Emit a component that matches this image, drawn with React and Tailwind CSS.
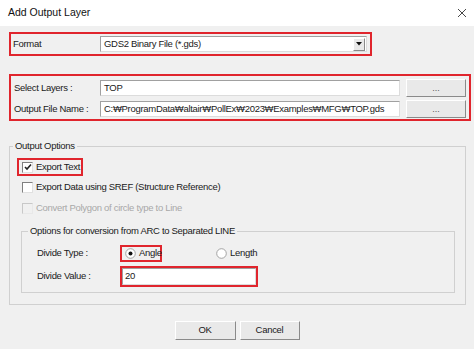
import React from "react";

const F = { fontFamily: '"Liberation Sans", Arial, sans-serif' };

function Sunken({ className = "", children }) {
  return (
    <div className={"bg-white border-t border-l border-t-[#a0a0a0] border-l-[#a0a0a0] border-b border-r border-b-[#dcdcdc] border-r-[#dcdcdc] flex items-center overflow-hidden whitespace-nowrap " + className}>
      {children}
    </div>
  );
}

function RaisedBtn({ className = "", children }) {
  return (
    <div className={"bg-[#e9e9e9] border-t border-l border-t-white border-l-white border-b border-r border-b-[#8a8a8a] border-r-[#8a8a8a] flex items-center justify-center " + className}>
      {children}
    </div>
  );
}

function Check({ checked, disabled }) {
  return (
    <div className={"w-[11px] h-[11px] border-t border-l border-b border-r flex items-center justify-center shrink-0 " + (disabled ? "bg-[#f0f0f0] border-t-[#c8c8c8] border-l-[#c8c8c8] border-b-[#e8e8e8] border-r-[#e8e8e8]" : "bg-white border-t-[#808080] border-l-[#808080] border-b-[#e0e0e0] border-r-[#e0e0e0]")}>
      {checked && (
        <svg width="8" height="8" viewBox="0 0 8 8">
          <path d="M1 4 L3 6 L7 1.5" fill="none" stroke="#222" strokeWidth="1.6" />
        </svg>
      )}
    </div>
  );
}

function Radio({ checked }) {
  return (
    <svg width="11" height="11" viewBox="0 0 11 11" className="shrink-0">
      <circle cx="5.5" cy="5.5" r="4.8" fill="white" stroke="#9a9a9a" strokeWidth="0.9" />
      {checked && <circle cx="5.5" cy="5.5" r="2" fill="#111" />}
    </svg>
  );
}

export default function App() {
  const txt = "text-[9.5px] tracking-[-0.3px] text-[#1a1a1a] whitespace-nowrap";
  return (
    <div className="w-[474px] h-[349px] bg-[#f0f0f0] flex flex-col overflow-hidden" style={F}>
      {/* Title bar */}
      <div className="h-[26px] bg-white flex items-center justify-between pl-[8px] pr-[8px] shrink-0">
        <span className="text-[10.5px] text-[#111]">Add Output Layer</span>
        <svg width="10" height="10" viewBox="0 0 10 10" className="-mr-[1px]">
          <path d="M1 1 L9 9 M9 1 L1 9" stroke="#333" strokeWidth="0.9" />
        </svg>
      </div>

      {/* Format */}
      <div className="mt-[6px] ml-[9px] w-[363px] h-[24px] border-2 border-[#e0252d] flex items-center pl-[2px] shrink-0">
        <span className={txt + " w-[87px]"}>Format</span>
        <Sunken className="w-[267px] h-[16px] pl-[3px] justify-between">
          <span className={txt}>GDS2 Binary File (*.gds)</span>
          <RaisedBtn className="w-[12px] h-[13px] mr-[1px]">
            <svg width="6" height="4" viewBox="0 0 6 4"><path d="M0 0 L6 0 L3 3.5 Z" fill="#111" /></svg>
          </RaisedBtn>
        </Sunken>
      </div>

      {/* Layers / File */}
      <div className="mt-[18px] ml-[9px] w-[462px] h-[47px] border-2 border-[#e0252d] flex flex-col pt-[2px] gap-[1px] pl-[3px] shrink-0">
        <div className="h-[20px] flex items-center">
          <span className={txt + " w-[86px]"}>Select Layers :</span>
          <Sunken className="w-[300px] h-[16px] pl-[3px]">
            <span className={txt}>TOP</span>
          </Sunken>
          <RaisedBtn className="ml-[6px] w-[60px] h-[18px]">
            <span className="text-[9px] text-[#555] leading-none">...</span>
          </RaisedBtn>
        </div>
        <div className="h-[20px] flex items-center">
          <span className={txt + " w-[86px]"}>Output File Name :</span>
          <Sunken className="w-[300px] h-[16px] pl-[3px]">
            <span className={txt}>C:₩ProgramData₩altair₩PollEx₩2023₩Examples₩MFG₩TOP.gds</span>
          </Sunken>
          <RaisedBtn className="ml-[6px] w-[60px] h-[18px]">
            <span className="text-[9px] text-[#555] leading-none">...</span>
          </RaisedBtn>
        </div>
      </div>

      {/* Output Options */}
      <fieldset className="mt-[19px] ml-[9px] w-[457px] h-[165px] border border-[#d0d0d0] shrink-0 flex flex-col">
        <legend className={txt + " ml-[3px] px-[2px] leading-[12px]"}>Output Options</legend>
        <div className="mt-[6px] ml-[7px] w-[66px] h-[18px] border-2 border-[#e0252d] flex items-center pl-[3px] gap-[3px] overflow-hidden">
          <Check checked />
          <span className={txt}>Export Text</span>
        </div>
        <div className="mt-[2px] ml-[12px] h-[18px] flex items-center gap-[3px]">
          <Check />
          <span className={txt}>Export Data using SREF (Structure Reference)</span>
        </div>
        <div className="mt-[3px] ml-[12px] h-[18px] flex items-center gap-[3px]">
          <Check disabled />
          <span className="text-[9.5px] tracking-[-0.3px] text-[#a8a8a8] whitespace-nowrap">Convert Polygon of circle type to Line</span>
        </div>

        <fieldset className="mt-[8px] ml-[11px] w-[434px] h-[68px] border border-[#d0d0d0] flex flex-col">
          <legend className={txt + " ml-[6px] px-[2px] leading-[12px]"}>Options for conversion from ARC to Separated LINE</legend>
          <div className="mt-[8px] flex items-center">
            <span className={txt + " pl-[15px] w-[98px]"}>Divide Type :</span>
            <div className="w-[42px] h-[17px] border-2 border-[#e0252d] flex items-center pl-[3px] gap-[3px]">
              <Radio checked />
              <span className={txt}>Angle</span>
            </div>
            <div className="ml-[54px] flex items-center gap-[3px]">
              <Radio />
              <span className={txt}>Length</span>
            </div>
          </div>
          <div className="mt-[4px] flex items-center">
            <span className={txt + " pl-[15px] w-[98px]"}>Divide Value :</span>
            <div className="w-[138px] h-[21px] border-2 border-[#e0252d] flex items-center">
              <Sunken className="w-[134px] h-[17px] pl-[2px]">
                <span className={txt}>20</span>
              </Sunken>
            </div>
          </div>
        </fieldset>
      </fieldset>

      {/* Buttons */}
      <div className="mt-[16px] flex justify-center gap-[4px]">
        <RaisedBtn className="w-[61px] h-[19px]">
          <span className={txt}>OK</span>
        </RaisedBtn>
        <RaisedBtn className="w-[60px] h-[19px]">
          <span className={txt}>Cancel</span>
        </RaisedBtn>
      </div>
    </div>
  );
}
